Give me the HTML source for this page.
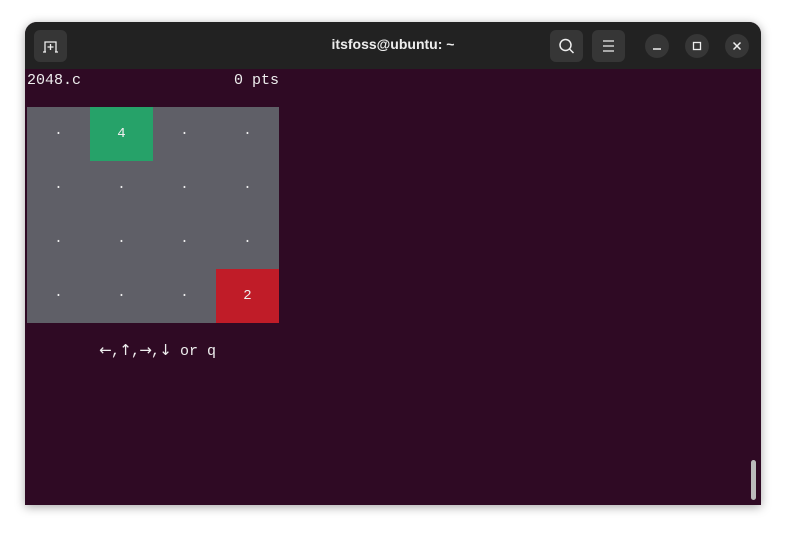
<!DOCTYPE html>
<html><head><meta charset="utf-8"><style>
body{margin:0;width:786px;height:533px;background:#fff;position:relative;overflow:hidden;font-family:"Liberation Mono",monospace}
.win{position:absolute;left:25px;top:22px;width:736px;height:483px;border-radius:12px 12px 0 0;overflow:hidden;box-shadow:0 2px 10px rgba(0,0,0,.35);background:#2f0a24}
.hdr{position:absolute;left:0;top:0;width:736px;height:47px;background:#222;}
.btn{position:absolute;top:8px;width:33px;height:32px;border-radius:6px;background:#363636}
.cb{position:absolute;top:12px;width:24px;height:24px;border-radius:50%;background:#363636}
.title{position:absolute;left:0;width:736px;top:14px;text-align:center;color:#eee;font:bold 14px "Liberation Sans",sans-serif}
.t{position:absolute;color:#eee;font-size:15px;line-height:18px}
.grid{position:absolute;left:2px;top:85px;width:252px;height:216px;background:#5f5f67}
.c{position:absolute;width:63px;height:54px;color:#eee;font-size:14px;text-align:center;line-height:54px}
.a{font-family:"DejaVu Sans",sans-serif;font-size:15px;display:inline-block;width:12px;text-align:center}
</style></head><body>
<div class="win">
<div class="hdr">
<div class="btn" style="left:9px"><svg width="33" height="32"><path d="M11 22V12h11v10" fill="none" stroke="#eee" stroke-width="1.3"/><path d="M9 22h3M21 22h3M16.5 14v6M13.5 17h6" stroke="#eee" stroke-width="1.3"/></svg></div>
<div class="title">itsfoss@ubuntu: ~</div>
<div class="btn" style="left:525px"><svg width="33" height="32"><circle cx="15.5" cy="15" r="5.5" fill="none" stroke="#eee" stroke-width="1.5"/><path d="M19.5 19l4 4" stroke="#eee" stroke-width="1.5"/></svg></div>
<div class="btn" style="left:567px"><svg width="33" height="32"><path d="M11 11h11M11 16h11M11 21h11" stroke="#eee" stroke-width="1.3"/></svg></div>
<div class="cb" style="left:620px"><svg width="24" height="24"><path d="M8 15h8" stroke="#eee" stroke-width="1.4"/></svg></div>
<div class="cb" style="left:660px"><svg width="24" height="24"><rect x="8.5" y="8.5" width="7" height="7" fill="none" stroke="#eee" stroke-width="1.3"/></svg></div>
<div class="cb" style="left:700px"><svg width="24" height="24"><path d="M8.5 8.5l7 7M15.5 8.5l-7 7" stroke="#eee" stroke-width="1.5"/></svg></div>
</div>
<div class="t" style="left:2px;top:50px">2048.c</div>
<div class="t" style="left:209px;top:50px">0 pts</div>
<div class="grid">
<div class="c" style="left:0;top:0">·</div><div class="c" style="left:63px;top:0;background:#26a269">4</div><div class="c" style="left:126px;top:0">·</div><div class="c" style="left:189px;top:0">·</div>
<div class="c" style="left:0;top:54px">·</div><div class="c" style="left:63px;top:54px">·</div><div class="c" style="left:126px;top:54px">·</div><div class="c" style="left:189px;top:54px">·</div>
<div class="c" style="left:0;top:108px">·</div><div class="c" style="left:63px;top:108px">·</div><div class="c" style="left:126px;top:108px">·</div><div class="c" style="left:189px;top:108px">·</div>
<div class="c" style="left:0;top:162px">·</div><div class="c" style="left:63px;top:162px">·</div><div class="c" style="left:126px;top:162px">·</div><div class="c" style="left:189px;top:162px;background:#c01c28">2</div>
</div>
<div class="t" style="left:74px;top:319px;font-size:15px;white-space:pre;letter-spacing:-1px"><span class="a">←</span>,<span class="a">↑</span>,<span class="a">→</span>,<span class="a">↓</span><span style="letter-spacing:0"> or q</span></div>
<div style="position:absolute;left:726px;top:438px;width:5px;height:40px;border-radius:3px;background:#bbb"></div>
</div>
</body></html>
